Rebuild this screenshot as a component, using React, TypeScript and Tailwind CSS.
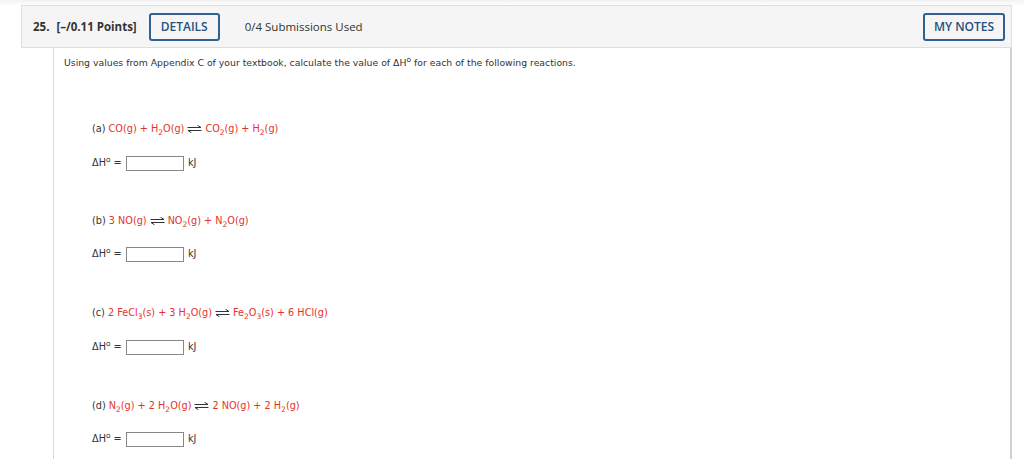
import React from "react";

const Arrow = () => (
  <svg width="15" height="8" viewBox="0 0 15 8" className="inline-block mx-[3px]" aria-hidden>
    <path d="M0.5 2.5 H14 M10.5 0.2 L14 2.5" stroke="#333" strokeWidth="1" fill="none" />
    <path d="M14.5 5.5 H1 M4.5 7.8 L1 5.5" stroke="#333" strokeWidth="1" fill="none" />
  </svg>
);

const Sub = ({ children }: { children: React.ReactNode }) => (
  <sub className="text-[7.5px] -bottom-[3px]">{children}</sub>
);

const DH = () => (
  <span>
    ΔH<sup className="text-[7.5px]">o</sup>
  </span>
);

const Answer = () => (
  <div className="flex items-center h-[16px] text-[9.7px]">
    <span className="w-[34px]"><DH /> =</span>
    <span className="w-[58px] h-[15px] border border-[#888] bg-white inline-block" />
    <span className="ml-[4px]">kJ</span>
  </div>
);

export default function App() {
  return (
    <div className="w-[1024px] h-[459px] bg-white overflow-hidden pt-[5px] pl-[21px] relative">
      <div className="absolute top-0 left-0 right-0 h-[6px] bg-gradient-to-b from-[#f3f3f3] to-white" />
      <div className="relative w-[991px] h-[43px] bg-[#f5f5f5] border border-[#dedede] flex items-center" style={{ fontFamily: '"Open Sans", "Liberation Sans", sans-serif' }}>
        <span className="ml-[11px] text-[11.5px] font-bold text-[#333]">25.</span>
        <span className="ml-[7px] text-[11.5px] font-bold text-[#333]">[–/0.11 Points]</span>
        <span className="ml-[12px] w-[71px] h-[28px] border-2 border-[#2f6193] rounded-[3px] flex items-center justify-center text-[12px] font-semibold text-[#24527f]">DETAILS</span>
        <span className="ml-[25px] text-[11.5px] text-[#333]">0/4 Submissions Used</span>
        <span className="ml-auto mr-[6px] w-[82px] h-[28px] border-2 border-[#2f6193] rounded-[3px] flex items-center justify-center text-[12px] font-semibold text-[#24527f]">MY NOTES</span>
      </div>
      <div
        className="ml-[32px] w-[959px] h-[420px] border-l border-l-[#d8d8d8] border-r-2 border-r-[#d0d0d0] pl-[10px] pt-[8px] text-[9.7px] text-[#333]"
        style={{ fontFamily: '"DejaVu Sans", Verdana, sans-serif' }}
      >
        <div className="text-[9.3px] leading-[14px]">
          Using values from Appendix C of your textbook, calculate the value of <DH /> for each of the following reactions.
        </div>
        <div className="pl-[28px]">
          <div className="mt-[51px] h-[16px] flex items-center">
            (a)&nbsp;<span className="text-[#e6302a]">CO(g) + H<Sub>2</Sub>O(g)</span><Arrow /><span className="text-[#e6302a]">CO<Sub>2</Sub>(g) + H<Sub>2</Sub>(g)</span>
          </div>
          <div className="mt-[18px]"><Answer /></div>

          <div className="mt-[42px] h-[16px] flex items-center">
            (b)&nbsp;<span className="text-[#e6302a]">3 NO(g)</span><Arrow /><span className="text-[#e6302a]">NO<Sub>2</Sub>(g) + N<Sub>2</Sub>O(g)</span>
          </div>
          <div className="mt-[17px]"><Answer /></div>

          <div className="mt-[43px] h-[16px] flex items-center">
            (c)&nbsp;<span className="text-[#e6302a]">2 FeCl<Sub>3</Sub>(s) + 3 H<Sub>2</Sub>O(g)</span><Arrow /><span className="text-[#e6302a]">Fe<Sub>2</Sub>O<Sub>3</Sub>(s) + 6 HCl(g)</span>
          </div>
          <div className="mt-[18px]"><Answer /></div>

          <div className="mt-[43px] h-[16px] flex items-center">
            (d)&nbsp;<span className="text-[#e6302a]">N<Sub>2</Sub>(g) + 2 H<Sub>2</Sub>O(g)</span><Arrow /><span className="text-[#e6302a]">2 NO(g) + 2 H<Sub>2</Sub>(g)</span>
          </div>
          <div className="mt-[17px]"><Answer /></div>
        </div>
      </div>
    </div>
  );
}
